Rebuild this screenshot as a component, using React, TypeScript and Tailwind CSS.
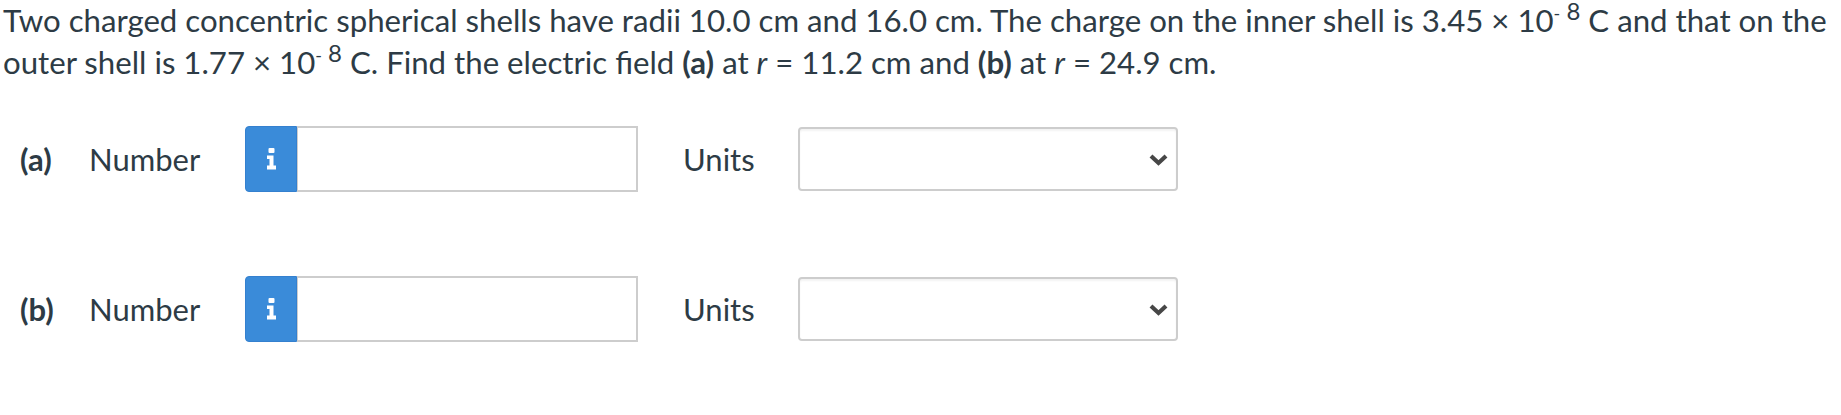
import React from 'react';

const InfoGlyph = () => (
    <svg width="11" height="22" viewBox="0 0 11 22" fill="#ffffff">
        <rect x="2.5" y="0" width="6" height="5" rx="1" />
        <path d="M1 7.5 H7.5 V17.5 H10 V21.5 H1 V17.5 H3.5 V11 H1 Z" />
    </svg>
);

const Chevron = () => (
    <svg width="19" height="13" viewBox="0 0 19 13">
        <polyline points="2,3 9.5,10 17,3" fill="none" stroke="#474747" strokeWidth="4.2" strokeLinecap="butt" />
    </svg>
);

const AnswerRow = ({ part }: { part: string }) => (
    <div className="flex items-center pl-[20px] text-[31px]">
        <span className="w-[69px] font-bold">({part})</span>
        <span className="w-[156px]">Number</span>
        {/* number input with info button */}
        <div className="flex w-[393px] h-[66px]">
            <div className="w-[52px] h-full flex items-center justify-center bg-[#3a8bd9] border border-[#3480cf] rounded-l-[4px]">
                <InfoGlyph />
            </div>
            <div className="flex-1 h-full bg-white border-2 border-l border-[#cdcdcd]"></div>
        </div>
        <span className="ml-[45px] w-[115px]">Units</span>
        {/* units select */}
        <div className="w-[380px] h-[64px] flex items-center justify-end pr-[8px] bg-white border-2 border-[#cdcdcd] rounded-[4px] shadow-[inset_0_2px_2px_rgba(0,0,0,0.05)]">
            <Chevron />
        </div>
    </div>
);

export default function App() {
    return (
        <div className="w-[1841px] h-[415px] bg-white text-[#2d3b45] font-['Lato','Open_Sans',sans-serif] overflow-hidden">
            <p className="text-[31.2px] leading-[42px] pl-[3px] -mt-[1px]">
                Two charged concentric spherical shells have radii 10.0 cm and 16.0 cm. The charge on the inner shell is 3.45 × 10
                <sup className="text-[24px]"><span className="text-[18px]">-</span> 8</sup> C and that on the outer shell is 1.77 × 10
                <sup className="text-[24px]"><span className="text-[18px]">-</span> 8</sup> C. Find the electric field <b>(a)</b> at <i>r</i> = 11.2 cm and <b>(b)</b> at <i>r</i> = 24.9 cm.
            </p>

            <div className="mt-[43px] flex flex-col gap-[84px]">
                <AnswerRow part="a" />
                <AnswerRow part="b" />
            </div>
        </div>
    );
}
